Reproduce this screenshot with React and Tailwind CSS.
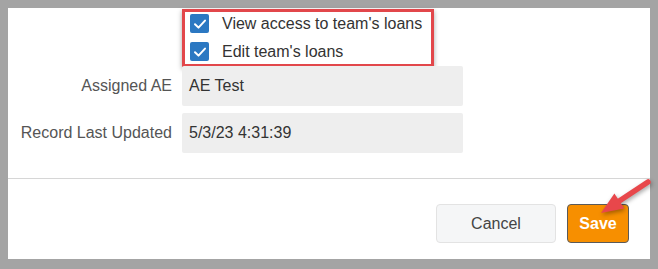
import React from "react";

function Check() {
  return (
    <span className="flex h-[19px] w-[19px] items-center justify-center rounded-[2px] bg-[#2b78c2]">
      <svg width="14" height="14" viewBox="0 0 14 14" fill="none">
        <path d="M2 7.2 L5.5 10.6 L12 3.6" stroke="white" strokeWidth="2" strokeLinecap="round" strokeLinejoin="round" />
      </svg>
    </span>
  );
}

export default function App() {
  return (
    <div
      className="h-[269px] w-[658px] bg-[#a4a4a4] pl-[8px] pr-[8px] pt-[8px] pb-[10px]"
      style={{ fontFamily: '"Liberation Sans", Arial, sans-serif' }}
    >
      <div className="relative flex h-full w-full flex-col bg-white">
        <div className="ml-[174px] mt-[1px] flex h-[58px] w-[252px] flex-col gap-[9px] border-[3px] border-[#e2474b] pl-[5px] pt-[2px] shadow-[0_2px_5px_rgba(0,0,0,0.35)]">
          <label className="flex items-center gap-[13px] text-[16px] leading-[19px] text-[#333]">
            <Check />
            <span>View access to team's loans</span>
          </label>
          <label className="flex items-center gap-[13px] text-[16px] leading-[19px] text-[#333]">
            <Check />
            <span>Edit team's loans</span>
          </label>
        </div>
        <div className="-mt-[1px] grid grid-cols-[164px_281px] gap-x-[10px] gap-y-[7px]">
          <div className="flex h-[40px] items-center justify-end text-[16px] text-[#555]">Assigned AE</div>
          <div className="flex h-[40px] items-center rounded-[2px] bg-[#eeeeee] pl-[7px] text-[16px] text-[#333]">AE Test</div>
          <div className="flex h-[40px] items-center justify-end text-[16px] text-[#555]">Record Last Updated</div>
          <div className="flex h-[40px] items-center rounded-[2px] bg-[#eeeeee] pl-[7px] text-[16px] text-[#333]">5/3/23 4:31:39</div>
        </div>
        <div className="mt-[25px] h-[1px] w-full bg-[#d6d6d6]" />
        <div className="mt-[25px] flex justify-end gap-[11px] pr-[21px]">
          <button className="flex h-[39px] w-[120px] items-center justify-center rounded-[4px] border border-[#e3e3e3] bg-[#f5f6f7] text-[16px] text-[#444]">
            Cancel
          </button>
          <button className="flex h-[39px] w-[62px] items-center justify-center rounded-[4px] border border-[#5a5a5a] bg-[#f78f00] text-[16px] font-bold text-white">
            Save
          </button>
        </div>
        <svg
          className="absolute left-[585px] top-[170px]"
          width="62"
          height="42"
          viewBox="0 0 62 42"
          style={{ filter: "drop-shadow(1px 2px 2px rgba(0,0,0,0.35))" }}
        >
          <line x1="55" y1="4" x2="24" y2="24.5" stroke="#e8474b" strokeWidth="5.5" strokeLinecap="round" />
          <polygon points="8,35 21.4,15.4 31.4,30.4" fill="#e8474b" />
        </svg>
      </div>
    </div>
  );
}
